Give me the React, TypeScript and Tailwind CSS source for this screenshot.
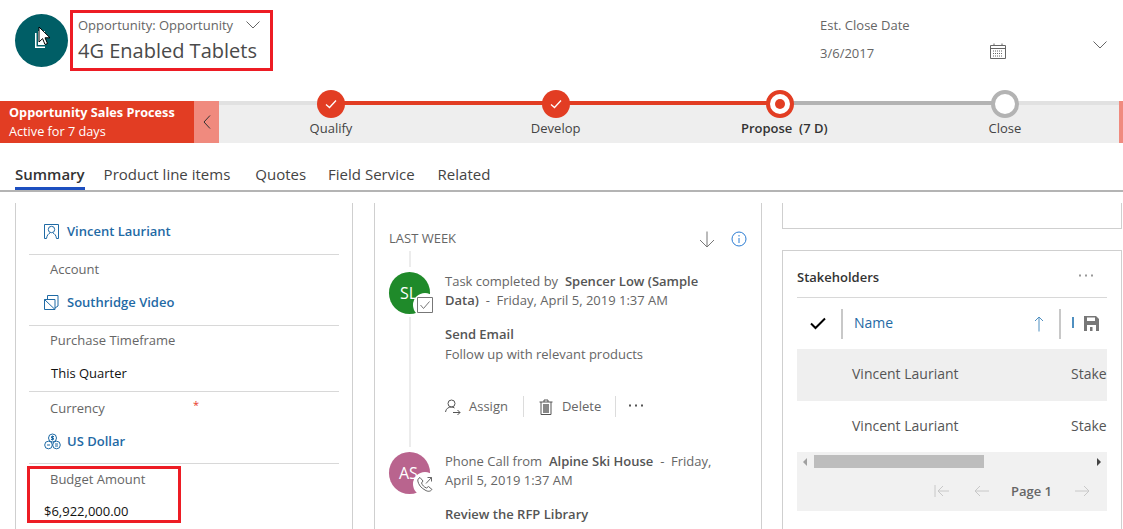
import React from "react";

const Chevron = ({ className = "" }: { className?: string }) => (
  <svg width="14" height="8" viewBox="0 0 14 8" fill="none" stroke="#666" strokeWidth="1" className={className}>
    <path d="M0.5 0.5 L7 7 L13.5 0.5" />
  </svg>
);

const Check = () => (
  <svg width="12" height="10" viewBox="0 0 12 10" fill="none" stroke="#fff" strokeWidth="1.3">
    <path d="M1 5.5 L4.5 8.5 L11 1.5" />
  </svg>
);

const Stage = ({ label, state, bold }: { label: React.ReactNode; state: "done" | "active" | "todo"; bold?: boolean }) => (
  <div className="relative z-10 flex w-[120px] flex-col items-center">
    {state === "done" && (
      <div className="flex h-7 w-7 items-center justify-center rounded-full bg-[#e23d23]">
        <Check />
      </div>
    )}
    {state === "active" && (
      <div className="flex h-7 w-7 items-center justify-center rounded-full border-[4px] border-[#e23d23] bg-white">
        <div className="h-[10px] w-[10px] rounded-full bg-[#e23d23]" />
      </div>
    )}
    {state === "todo" && <div className="h-7 w-7 rounded-full border-[4px] border-[#b3b3b3] bg-white" />}
    <div className={`mt-[1px] whitespace-nowrap text-[13px] leading-[18px] ${bold ? "translate-x-[4px] font-semibold text-[#333]" : "text-[#444]"}`}>{label}</div>
  </div>
);

const Label = ({ children }: { children: React.ReactNode }) => (
  <div className="pl-[21px] text-[13px] leading-[18px] text-[#666]">{children}</div>
);

const LinkVal = ({ icon, children }: { icon: React.ReactNode; children: React.ReactNode }) => (
  <div className="flex items-center text-[13px] font-semibold leading-[18px] text-[#1f6aa5]">
    <span className="flex w-[38px] pl-[15px]">{icon}</span>
    {children}
  </div>
);

const ContactIcon = () => (
  <svg width="15" height="15" viewBox="0 0 15 15" fill="none" stroke="#1f6aa5" strokeWidth="1">
    <path d="M2.5 14.5 H0.5 V0.5 H14.5 V14.5 H12.5" />
    <circle cx="7.5" cy="5.5" r="3.2" />
    <path d="M2.5 14.5 C3 11 4.5 9.8 6 9 M12.5 14.5 C12 11 10.5 9.8 9 9" />
  </svg>
);

const AccountIcon = () => (
  <svg width="15" height="15" viewBox="0 0 15 15" fill="none" stroke="#1f6aa5" strokeWidth="1">
    <path d="M0.5 4.5 H11 V14.5 H0.5 Z M0.5 4.5 L11 14.5" />
    <path d="M3.5 4 V0.5 H14 V11 L11 13" />
  </svg>
);

const CurrencyIcon = () => (
  <svg width="17" height="17" viewBox="0 0 17 17" fill="none" stroke="#1f6aa5" strokeWidth="1">
    <circle cx="8.5" cy="5" r="4" />
    <circle cx="4.5" cy="12" r="3.8" />
    <circle cx="12.5" cy="12" r="3.8" />
    <path d="M10 3.5 H7.5 V5 H9.5 V6.5 H7 M8.5 2.5 V7.5 M3 12 H6 M11 11 H14 M11 13 H14" />
  </svg>
);

const Divider = () => <div className="h-px bg-[#d8d8d8]" />;

const Dots = ({ color }: { color: string }) => (
  <svg width="14" height="3" viewBox="0 0 14 3" fill={color}>
    <rect x="0" y="0.5" width="2" height="2" />
    <rect x="6" y="0.5" width="2" height="2" />
    <rect x="12" y="0.5" width="2" height="2" />
  </svg>
);

const NavArrow = ({ flip, bar, color }: { flip?: boolean; bar?: boolean; color: string }) => (
  <svg width="16" height="14" viewBox="0 0 16 14" fill="none" stroke={color} strokeWidth="1" className={flip ? "rotate-180" : ""}>
    {bar && <path d="M1 1 V13" />}
    <path d={bar ? "M15 7 H4 M9 2 L4 7 L9 12" : "M15 7 H1 M6 2 L1 7 L6 12"} />
  </svg>
);

export default function App() {
  return (
    <div className="h-[529px] w-[1123px] overflow-hidden bg-white font-['Open_Sans','Noto_Sans',sans-serif] text-[#333]">
      {/* Header */}
      <header className="flex h-[101px] items-start">
        <div className="relative ml-[15px] mt-[14px] flex h-[53px] w-[53px] items-center justify-center rounded-full bg-[#005e66]">
          <svg width="14" height="20" viewBox="0 0 14 20" fill="#fff" className="mt-[1px] -translate-x-px">
            <path d="M1 0 H11 V14 H4 V0 Z" />
            <path d="M1 2 V17 H11 V15.5 H2.5 V2 Z" />
          </svg>
          <svg width="15" height="21" viewBox="0 0 15 21" className="absolute left-[23px] top-[12px]">
            <path d="M1 1 V16 L4.6 12.6 L7 18.5 L9.5 17.5 L7 11.8 L12 11.8 Z" fill="#fff" stroke="#000" strokeWidth="1" />
          </svg>
        </div>
        <div className="ml-[2px] mt-[10px] h-[61px] w-[203px] border-[3px] border-[#ed1c24] pl-[5px] pt-[2px]">
          <div className="flex items-center whitespace-nowrap text-[13px] leading-[20px] text-[#666]">
            Opportunity: Opportunity
            <Chevron className="ml-[13px]" />
          </div>
          <div className="mt-[2px] whitespace-nowrap text-[20px] leading-[28px] text-[#4a4a4a]">4G Enabled Tablets</div>
        </div>
        <div className="ml-[547px] mt-[16px] w-[187px]">
          <div className="text-[13px] leading-[18px] text-[#666]">Est. Close Date</div>
          <div className="mt-[10px] flex items-center justify-between text-[13px] leading-[18px] text-[#666]">
            3/6/2017
            <svg width="16" height="16" viewBox="0 0 16 16" fill="none" stroke="#666" strokeWidth="1" className="-mt-[5px] mr-[1px]">
              <path d="M0.5 2.5 H15.5 V15.5 H0.5 Z M0.5 5.5 H15.5 M4 0.5 V3 M12 0.5 V3" />
              <path d="M3 8 H13 M3 10.5 H13 M3 13 H13" strokeDasharray="1 1" />
            </svg>
          </div>
        </div>
        <Chevron className="ml-[86px] mt-[41px]" />
      </header>

      {/* Business process flow */}
      <section className="flex h-[42px]">
        <div className="w-[194px] bg-[#e23d23] pl-[9px] pt-[2px] text-white">
          <div className="whitespace-nowrap text-[12.7px] font-bold leading-[19px]">Opportunity Sales Process</div>
          <div className="text-[12.7px] leading-[19px]">Active for 7 days</div>
        </div>
        <div className="flex w-[25px] items-center justify-center bg-[#f08a7e]">
          <svg width="8" height="14" viewBox="0 0 8 14" fill="none" stroke="#333" strokeWidth="1">
            <path d="M7 0.5 L1 7 L7 13.5" />
          </svg>
        </div>
        <div className="relative flex-1 bg-[#eeeeee]">
          <div className="h-1 bg-[#e1e1e1]" />
          <div className="absolute left-[112px] top-0 h-1 w-[449px] bg-[#e23d23]" />
          <div className="absolute left-[561px] top-0 h-1 w-[225px] bg-[#b3b3b3]" />
          <div className="absolute -top-[11px] left-[52px] flex w-[794px] justify-between">
            <Stage label="Qualify" state="done" />
            <Stage label="Develop" state="done" />
            <Stage bold label={<span>Propose&nbsp; (7 D)</span>} state="active" />
            <Stage label="Close" state="todo" />
          </div>
          <div className="absolute right-0 top-0 h-full w-1 bg-[#f08a7e]" />
        </div>
      </section>

      {/* Tabs */}
      <nav className="relative flex h-[49px] items-start gap-[20px] pl-[15px] pt-[21px] text-[15px] leading-[20px] text-[#444] after:absolute after:bottom-0 after:left-0 after:h-[2px] after:w-full after:bg-[#b4b4b4]">
        <div className="relative h-[25px] font-semibold text-[#333]">
          Summary
          <div className="absolute -bottom-[1px] left-0 right-0 z-10 h-[3px] bg-[#1d4fc0]" />
        </div>
        <div className="-ml-[1px]">Product line items</div>
        <div className="ml-[5px]">Quotes</div>
        <div className="ml-[2px]">Field Service</div>
        <div className="ml-[3px]">Related</div>
      </nav>

      {/* Body */}
      <main className="flex items-start pl-[15px] pt-[11px]">
        {/* Left */}
        <div className="h-[330px] w-[338px] shrink-0 border-l border-r border-[#cfcfcf] pl-[13px] pr-[13px] pt-[19px]">
          <LinkVal icon={<ContactIcon />}>Vincent Lauriant</LinkVal>
          <div className="mt-[14px]"><Divider /></div>
          <div className="mt-[5px]"><Label>Account</Label></div>
          <div className="mt-[15px]"><LinkVal icon={<AccountIcon />}>Southridge Video</LinkVal></div>
          <div className="mt-[14px]"><Divider /></div>
          <div className="mt-[5px]"><Label>Purchase Timeframe</Label></div>
          <div className="mt-[15px] pl-[22px] text-[13px] font-medium leading-[18px] text-[#111]">This Quarter</div>
          <div className="mt-[9px]"><Divider /></div>
          <div className="relative mt-[7px]">
            <Label>Currency</Label>
            <span className="absolute left-[164px] -top-[2px] text-[11px] text-[#e8392a]">*</span>
          </div>
          <div className="mt-[15px]"><LinkVal icon={<CurrencyIcon />}>US Dollar</LinkVal></div>
          <div className="mt-[13px]"><Divider /></div>
          <div className="-ml-[2px] mt-[2px] h-[57px] w-[154px] border-[3px] border-[#ed1c24] pl-[20px] pt-[1px]">
            <div className="text-[13px] leading-[18px] text-[#666]">Budget Amount</div>
            <div className="-ml-[6px] mt-[14px] text-[13px] font-medium leading-[18px] text-[#111]">$6,922,000.00</div>
          </div>
        </div>

        {/* Middle */}
        <div className="ml-[21px] h-[330px] w-[388px] shrink-0 border-x border-[#cfcfcf] pl-[14px] pr-[13px] pt-[24px]">
          <div className="flex h-[24px] items-center justify-between">
            <div className="-mt-[2px] text-[13px] leading-[18px] text-[#666]">LAST WEEK</div>
            <div className="mr-[1px] flex items-center gap-[16px]">
              <svg width="16" height="17" viewBox="0 0 16 17" fill="none" stroke="#777" strokeWidth="1">
                <path d="M8 0.5 V16 M1 9 L8 16 L15 9" />
              </svg>
              <svg width="16" height="16" viewBox="0 0 16 16" fill="none" stroke="#2b7cd3" strokeWidth="1">
                <circle cx="8" cy="8" r="7" />
                <path d="M8 7 V12 M8 4 V5.5" />
              </svg>
            </div>
          </div>

          <div className="relative mt-[9px]">
            <div className="absolute -top-[9px] left-[20px] h-[16px] w-[2px] bg-[#ececec]" />
            <div className="absolute left-[20px] top-[57px] h-[130px] w-[2px] bg-[#ececec]" />

            <div className="flex gap-[15px] pt-[12px]">
              <div className="relative h-[42px] w-[41px] shrink-0 rounded-full bg-[#1f8a2a] pl-[11px] pt-[11px] text-[16px] leading-[20px] text-white">
                SL
                <div className="absolute left-[24px] top-[21px] flex h-[24px] w-[24px] items-center justify-center rounded-full bg-white">
                  <svg width="16" height="16" viewBox="0 0 16 16" fill="none" stroke="#777" strokeWidth="1">
                    <path d="M0.5 0.5 H15.5 V15.5 H0.5 Z M3.5 8 L6.5 11.5 L12.5 4.5" />
                  </svg>
                </div>
              </div>
              <div className="w-[285px] text-[13px] leading-[19px] text-[#666]">
                <div>
                  Task completed by&nbsp; <span className="font-semibold text-[#555]">Spencer Low (Sample Data)</span>&nbsp; -&nbsp; Friday, April 5, 2019 1:37 AM
                </div>
                <div className="mt-[14px] font-semibold leading-[20px] text-[#555]">Send Email</div>
                <div className="leading-[20px]">Follow up with relevant products</div>
                <div className="mt-[32px] flex h-[21px] items-center text-[13px] text-[#666]">
                  <svg width="16" height="16" viewBox="0 0 16 16" fill="none" stroke="#555" strokeWidth="1">
                    <circle cx="6.5" cy="4.5" r="3.5" />
                    <path d="M0.5 13 C1 9.5 3.5 8 6.5 8 C7.5 8 8.5 8.3 9.5 9 M8 13.5 H15 M12.5 11 L15 13.5 L12.5 16" />
                  </svg>
                  <span className="ml-[8px]">Assign</span>
                  <div className="ml-[15px] h-[21px] w-px bg-[#dcdcdc]" />
                  <svg width="14" height="16" viewBox="0 0 14 16" fill="none" stroke="#555" strokeWidth="1" className="ml-[15px]">
                    <path d="M0.5 3 H13.5 M5 3 V1 H9 V3 M2 3 V15.5 H12 V3" />
                    <rect x="4" y="5" width="6" height="9" fill="#888" stroke="none" />
                  </svg>
                  <span className="ml-[9px]">Delete</span>
                  <div className="ml-[14px] h-[21px] w-px bg-[#dcdcdc]" />
                  <div className="ml-[13px] -mt-[3px] flex"><Dots color="#555" /></div>
                </div>
              </div>
            </div>

            <div className="mt-[35px] flex gap-[15px]">
              <div className="relative h-[42px] w-[41px] shrink-0 rounded-full bg-[#b9648e] pl-[10px] pt-[11px] text-[16px] leading-[20px] text-white">
                AS
                <div className="absolute left-[24px] top-[20px] flex h-[24px] w-[24px] items-center justify-center rounded-full bg-white">
                  <svg width="16" height="16" viewBox="0 0 16 16" fill="none" stroke="#666" strokeWidth="1">
                    <path d="M3 1.5 L6 5 L4.5 7 C5.5 9.5 7 11 9.5 12 L11.5 10.5 L15 13.5 C13.5 15.5 11 16 8 14 C4 12 1.5 8.5 0.8 5 C0.6 3.5 1.5 2.2 3 1.5 Z M9 7.5 L14.5 1.5 M10.5 1.5 H14.5 V5.5" />
                  </svg>
                </div>
              </div>
              <div className="w-[285px] text-[13px] leading-[19px] text-[#666]">
                <div>
                  Phone Call from&nbsp; <span className="font-semibold text-[#555]">Alpine Ski House</span>&nbsp; -&nbsp; Friday, April 5, 2019 1:37 AM
                </div>
                <div className="mt-[14px] font-semibold leading-[20px] text-[#555]">Review the RFP Library</div>
              </div>
            </div>
          </div>
        </div>

        {/* Right */}
        <div className="ml-[20px] flex w-[340px] shrink-0 flex-col">
          <div className="h-[26px] border-x border-b border-[#cfcfcf]" />
          <div className="mt-[21px] h-[290px] border border-[#cfcfcf] px-[14px] pt-[16px]">
            <div className="flex h-[31px] items-start justify-between border-b border-[#d8d8d8]">
              <div className="text-[13px] font-semibold leading-[20px] text-[#333]">Stakeholders</div>
              <div className="mr-[14px] mt-[7px] flex"><Dots color="#999" /></div>
            </div>
            <div className="flex h-[51px] items-center overflow-hidden">
              <svg width="16" height="13" viewBox="0 0 16 13" fill="none" stroke="#000" strokeWidth="2" className="ml-[13px] shrink-0">
                <path d="M1 6.5 L5.5 11 L15 1.5" />
              </svg>
              <div className="ml-[15px] h-[30px] w-[2px] shrink-0 bg-[#c8c8c8]" />
              <div className="mb-[2px] ml-[11px] w-[182px] shrink-0 text-[14px] text-[#1f6aa5]">Name</div>
              <svg width="10" height="16" viewBox="0 0 10 16" fill="none" stroke="#4f8fc0" strokeWidth="1" className="-ml-[2px] shrink-0">
                <path d="M5 15.5 V1 M1 5 L5 1 L9 5" />
              </svg>
              <div className="ml-[15px] h-[30px] w-[2px] shrink-0 bg-[#c8c8c8]" />
              <div className="ml-[11px] mb-[3px] h-[11px] w-[2px] shrink-0 bg-[#4f8fc0]" />
              <svg width="15" height="15" viewBox="0 0 15 15" fill="#777" className="ml-[10px] shrink-0">
                <path d="M0 0 H12 L15 3 V15 H0 Z" />
                <rect x="3" y="1.5" width="8" height="3.5" fill="#fff" />
                <rect x="3" y="9" width="9" height="6" fill="#fff" />
                <rect x="6" y="11" width="2.5" height="4" fill="#777" />
              </svg>
            </div>
            <div className="flex h-[52px] items-center overflow-hidden bg-[#efefef] pb-[3px] pl-[55px] text-[14px] text-[#555]">
              <span className="w-[219px] shrink-0 whitespace-nowrap">Vincent Lauriant</span>
              <span>Stake</span>
            </div>
            <div className="flex h-[51px] items-center overflow-hidden pb-[3px] pl-[55px] text-[14px] text-[#555]">
              <span className="w-[219px] shrink-0 whitespace-nowrap">Vincent Lauriant</span>
              <span>Stake</span>
            </div>
            <div className="bg-[#f1f1f1]">
              <div className="flex h-[19px] items-center justify-between px-[6px]">
                <div className="flex items-center gap-[4px]">
                  <div className="h-0 w-0 border-y-[4px] border-r-[4px] border-y-transparent border-r-[#a0a0a0]" />
                  <div className="ml-[3px] h-[13px] w-[170px] bg-[#bdbdbd]" />
                </div>
                <div className="h-0 w-0 border-y-[4px] border-l-[4px] border-y-transparent border-l-[#444]" />
              </div>
              <div className="flex h-[40px] items-center pl-[137px]">
                <NavArrow bar color="#c8c8c8" />
                <div className="ml-[24px]"><NavArrow color="#c8c8c8" /></div>
                <span className="ml-[21px] mt-[2px] text-[13px] font-semibold text-[#666]">Page 1</span>
                <div className="ml-[22px]"><NavArrow flip color="#c8c8c8" /></div>
              </div>
            </div>
          </div>
        </div>
      </main>
    </div>
  );
}
